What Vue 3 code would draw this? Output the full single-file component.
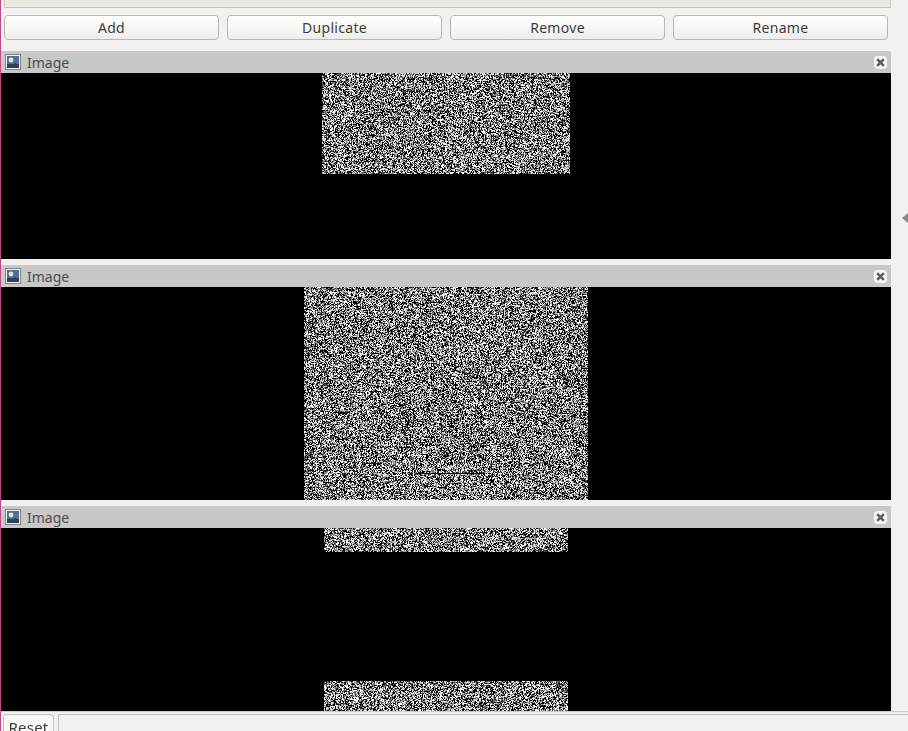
<script setup>
import { onMounted, ref } from 'vue'

const buttons = ['Add', 'Duplicate', 'Remove', 'Rename']
const panels = [
  { id: 1, height: 186, align: 'start', blocks: [{ w: 248, h: 101 }] },
  { id: 2, height: 213, align: 'start', blocks: [{ w: 284, h: 213, streaks: true }] },
  { id: 3, height: 183, align: 'split', blocks: [{ w: 244, h: 24 }, { w: 244, h: 30 }] }
]

const root = ref(null)

const streaks = [
  [111, 186, 70],
  [30, 125, 16],
  [34, 126, 10],
  [95, 160, 14],
  [120, 150, 10],
  [60, 176, 18]
]

onMounted(() => {
  let seed = 20231
  const rnd = () => {
    seed = (seed * 1664525 + 1013904223) >>> 0
    return (seed >>> 8) / 16777216
  }
  root.value.querySelectorAll('canvas').forEach((c) => {
    const ctx = c.getContext('2d')
    const img = ctx.createImageData(c.width, c.height)
    for (let i = 0; i < img.data.length; i += 4) {
      const r = rnd()
      const v = r < 0.3 ? 0 : r < 0.52 ? 255 : 50 + Math.floor(rnd() * 170)
      img.data[i] = img.data[i + 1] = img.data[i + 2] = v
      img.data[i + 3] = 255
    }
    if (c.dataset.streaks) {
      streaks.forEach(([x, y, len]) => {
        for (let k = 0; k < len; k++) {
          const p = (y * c.width + x + k) * 4
          img.data[p] = img.data[p + 1] = img.data[p + 2] = 20
        }
      })
    }
    ctx.putImageData(img, 0, 0)
  })
})
</script>

<template>
  <div ref="root" class="window">
    <div class="workspace">
      <main class="main">
        <div class="top-strip"></div>
        <div class="button-row">
          <button v-for="b in buttons" :key="b" class="btn">{{ b }}</button>
        </div>
        <div class="panels">
          <section v-for="p in panels" :key="p.id" class="panel">
            <header class="titlebar">
              <svg class="image-icon" width="16" height="16" viewBox="0 0 16 16">
                <rect x="0.5" y="0.5" width="15" height="15" fill="#f0f0f0" stroke="#858585" />
                <rect x="2" y="2" width="12" height="12" fill="#4f6f9f" />
                <rect x="2" y="10" width="12" height="4" fill="#2b3f63" />
                <circle cx="6" cy="6" r="2.4" fill="#e4ecc4" />
                <path d="M8 12 L10 9 L11 9 L12 11 L14 12 L14 14 L8 14 Z" fill="#3a3f48" />
              </svg>
              <span class="title">Image</span>
              <span class="close">
                <svg width="9" height="9" viewBox="0 0 9 9">
                  <path d="M1.2 1.2 L7.8 7.8 M7.8 1.2 L1.2 7.8" stroke="#5c5c5c" stroke-width="2.6" />
                </svg>
              </span>
            </header>
            <div class="viewport" :class="{ split: p.align === 'split' }" :style="{ height: p.height + 'px' }">
              <canvas
                v-for="(b, i) in p.blocks"
                :key="i"
                class="noise"
                :width="b.w"
                :height="b.h"
                :data-streaks="b.streaks ? '1' : null"
              ></canvas>
            </div>
          </section>
        </div>
      </main>
      <aside class="side">
        <span class="handle"></span>
      </aside>
    </div>
    <footer class="footer">
      <div class="reset-tab">Reset</div>
      <div class="status-box"></div>
    </footer>
  </div>
</template>

<style>
html, body { margin: 0; background: #f2f1f0; }
</style>

<style scoped>
.window {
  width: 908px;
  height: 731px;
  box-sizing: border-box;
  overflow: hidden;
  background: #f2f1f0;
  border-left: 1px solid #c04a84;
  font-family: "Noto Sans", "Open Sans", sans-serif;
  font-size: 14px;
  color: #3c3c3c;
}
.workspace {
  display: flex;
  height: 711px;
}
.main {
  width: 890px;
  flex: none;
}
.top-strip {
  height: 7px;
  margin-left: 3px;
  background: #ece9e3;
  border-bottom: 1px solid #c9c6c0;
  border-right: 1px solid #c9c6c0;
  border-left: 1px solid #c9c6c0;
}
.button-row {
  display: flex;
  gap: 8px;
  padding: 7px 0 0 3px;
}
.btn {
  width: 215px;
  height: 25px;
  padding: 0;
  border: 1px solid #bab7b2;
  border-radius: 4px;
  background: linear-gradient(#ffffff, #f7f7f6 50%, #eeedec);
  font: inherit;
  letter-spacing: 0.3px;
  color: #3c3c3c;
}
.panels {
  display: flex;
  flex-direction: column;
  gap: 6px;
  padding-top: 11px;
}
.titlebar {
  display: flex;
  align-items: center;
  height: 22px;
  background: #c8c8c8;
  padding: 0 3px 0 4px;
}
.image-icon { flex: none; }
.title {
  margin-left: 6px;
  color: #4c4c4c;
  flex: 1;
}
.close {
  display: flex;
  align-items: center;
  justify-content: center;
  width: 13px;
  height: 13px;
  background: #f6f6f6;
  border-radius: 4px;
  margin-right: 1px;
}
.viewport {
  display: flex;
  flex-direction: column;
  align-items: center;
  background: #000;
}
.viewport.split { justify-content: space-between; }
.noise { display: block; flex: none; }
.side {
  flex: 1;
  padding-top: 213px;
  display: flex;
  justify-content: flex-end;
  align-items: flex-start;
}
.handle {
  width: 0;
  height: 0;
  border-style: solid;
  border-width: 5px 6px 5px 0;
  border-color: transparent #8c8a86 transparent transparent;
}
.footer {
  display: flex;
  height: 20px;
  box-sizing: border-box;
  border-top: 1px solid #cfcdc9;
  padding: 2px 0 0 2px;
  gap: 4px;
}
.reset-tab {
  width: 51px;
  box-sizing: border-box;
  border: 1px solid #c4c2bd;
  border-bottom: none;
  border-radius: 4px 4px 0 0;
  background: #f7f7f6;
  text-align: center;
  font-size: 15px;
  letter-spacing: 0.2px;
  line-height: 24px;
  height: 22px;
}
.status-box {
  flex: 1;
  border-top: 1px solid #c4c2bd;
  border-left: 1px solid #c4c2bd;
}
</style>
